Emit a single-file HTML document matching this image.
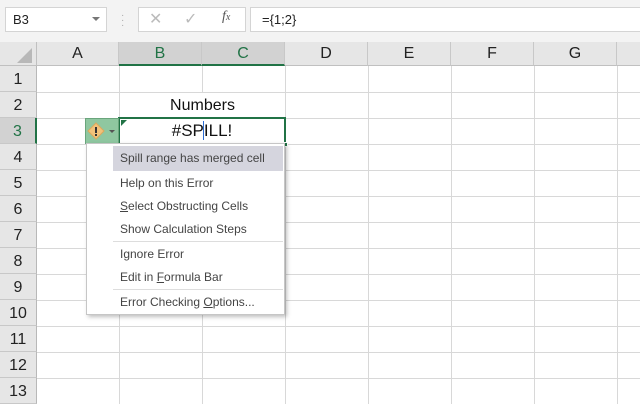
<!DOCTYPE html><html><head><style>
*{margin:0;padding:0;box-sizing:border-box}
body{width:640px;height:404px;overflow:hidden;background:#fff;font-family:"Liberation Sans",sans-serif;position:relative}
.a{position:absolute}
.top{left:0;top:0;width:640px;height:42px;background:#f3f3f3}
.box{background:#fff;border:1px solid #d4d4d4}
.ch{top:42px;height:24px;background:#e6e6e6;border-right:1px solid #c8c8c8;border-bottom:1px solid #c0c0c0;text-align:center;font-size:16px;line-height:24px;color:#222}
.rh{left:0;width:37px;height:26px;background:#e6e6e6;border-bottom:1px solid #c8c8c8;border-right:1px solid #b8b8b8;text-align:center;font-size:16px;line-height:27px;color:#222}
.vl{top:66px;width:1px;height:338px;background:#d8d8d8}
.hl{left:37px;width:603px;height:1px;background:#d8d8d8}
.mi{left:120px;font-size:12px;color:#444;height:20px;line-height:20px}
</style></head><body>
<div class="a top"></div>
<div class="a box" style="left:5px;top:7px;width:102px;height:25px;font-size:13px;line-height:23px;padding-left:7px;color:#222">B3</div>
<div class="a" style="left:92px;top:17px;width:0;height:0;border-left:4px solid transparent;border-right:4px solid transparent;border-top:4px solid #777"></div>
<div class="a" style="left:121px;top:13px;color:#aaa;font-size:10px;line-height:5px">·<br>·<br>·</div>
<div class="a box" style="left:138px;top:7px;width:108px;height:25px"></div>
<div class="a" style="left:149px;top:9px;color:#bbb;font-size:16px">✕</div>
<div class="a" style="left:184px;top:9px;color:#bbb;font-size:16px">✓</div>
<div class="a" style="left:222px;top:9px;color:#555;font-size:14px;font-style:italic;font-family:'Liberation Serif',serif">f<span style="font-size:10px">x</span></div>
<div class="a box" style="left:250px;top:7px;width:395px;height:25px;font-size:13px;line-height:23px;padding-left:11px;color:#222">={1;2}</div>
<div class="a" style="left:0;top:42px;width:37px;height:24px;background:#e6e6e6;border-right:1px solid #c0c0c0;border-bottom:1px solid #c0c0c0"></div>
<div class="a" style="left:17px;top:48px;width:0;height:0;border-left:15px solid transparent;border-bottom:15px solid #b8b8b8"></div>
<div class="a ch" style="left:37px;width:82px">A</div>
<div class="a ch" style="left:119px;width:83px;background:#d2d2d2;color:#217346;border-bottom:2px solid #217346">B</div>
<div class="a ch" style="left:202px;width:83px;background:#d2d2d2;color:#217346;border-bottom:2px solid #217346">C</div>
<div class="a ch" style="left:285px;width:83px">D</div>
<div class="a ch" style="left:368px;width:83px">E</div>
<div class="a ch" style="left:451px;width:83px">F</div>
<div class="a ch" style="left:534px;width:83px">G</div>
<div class="a ch" style="left:617px;width:30px"></div>
<div class="a vl" style="left:119px"></div><div class="a vl" style="left:202px"></div><div class="a vl" style="left:285px"></div><div class="a vl" style="left:368px"></div><div class="a vl" style="left:451px"></div><div class="a vl" style="left:534px"></div><div class="a vl" style="left:617px"></div>
<div class="a rh" style="top:66px">1</div><div class="a hl" style="top:92px"></div>
<div class="a rh" style="top:92px">2</div><div class="a hl" style="top:118px"></div>
<div class="a rh" style="top:118px;background:#d2d2d2;border-right:2px solid #217346;color:#217346">3</div><div class="a hl" style="top:144px"></div>
<div class="a rh" style="top:144px">4</div><div class="a hl" style="top:170px"></div>
<div class="a rh" style="top:170px">5</div><div class="a hl" style="top:196px"></div>
<div class="a rh" style="top:196px">6</div><div class="a hl" style="top:222px"></div>
<div class="a rh" style="top:222px">7</div><div class="a hl" style="top:248px"></div>
<div class="a rh" style="top:248px">8</div><div class="a hl" style="top:274px"></div>
<div class="a rh" style="top:274px">9</div><div class="a hl" style="top:300px"></div>
<div class="a rh" style="top:300px">10</div><div class="a hl" style="top:326px"></div>
<div class="a rh" style="top:326px">11</div><div class="a hl" style="top:352px"></div>
<div class="a rh" style="top:352px">12</div><div class="a hl" style="top:378px"></div>
<div class="a rh" style="top:378px">13</div>
<div class="a" style="left:120px;top:93px;width:165px;height:25px;background:#fff;text-align:center;font-size:16px;line-height:25px;color:#111">Numbers</div>
<div class="a" style="left:118px;top:117px;width:168px;height:28px;background:#fff;border:2px solid #217346;text-align:center;font-size:17px;line-height:24px;color:#111">#SP<span style="border-left:1px solid #2b6cd4;margin-left:-1px"></span>ILL!</div>
<div class="a" style="left:121px;top:120px;width:0;height:0;border-top:6px solid #217346;border-right:6px solid transparent"></div>
<div class="a" style="left:283px;top:142px;width:5px;height:5px;background:#217346;border:1px solid #fff"></div>
<div class="a" style="left:85px;top:118px;width:34px;height:26px;background:#8fc7a0;border:1px solid #6aa57c"></div>
<svg class="a" style="left:87px;top:122px" width="18" height="18" viewBox="0 0 18 18"><path d="M9 1 L17 9 L9 17 L1 9 Z" fill="#f2c27a" stroke="#dba85c"/><rect x="8" y="5" width="2" height="6" fill="#333"/><rect x="8" y="12" width="2" height="2" fill="#333"/></svg>
<div class="a" style="left:109px;top:130px;width:0;height:0;border-left:3px solid transparent;border-right:3px solid transparent;border-top:3px solid #555"></div>
<div class="a" style="left:86px;top:143px;width:199px;height:172px;background:#fff;border:1px solid #c6c6c6;box-shadow:2px 2px 4px rgba(0,0,0,.25)"></div>
<div class="a" style="left:113px;top:146px;width:170px;height:25px;background:#d5d5de"></div>
<div class="a mi" style="top:148px">Spill range has merged cell</div>
<div class="a mi" style="top:173px">Help on this Error</div>
<div class="a mi" style="top:196px"><u>S</u>elect Obstructing Cells</div>
<div class="a mi" style="top:219px">Show Calculation Steps</div>
<div class="a" style="left:113px;top:241px;width:170px;height:1px;background:#ddd"></div>
<div class="a mi" style="top:244px">Ignore Error</div>
<div class="a mi" style="top:267px">Edit in <u>F</u>ormula Bar</div>
<div class="a" style="left:113px;top:289px;width:170px;height:1px;background:#ddd"></div>
<div class="a mi" style="top:292px">Error Checking <u>O</u>ptions...</div>
</body></html>
